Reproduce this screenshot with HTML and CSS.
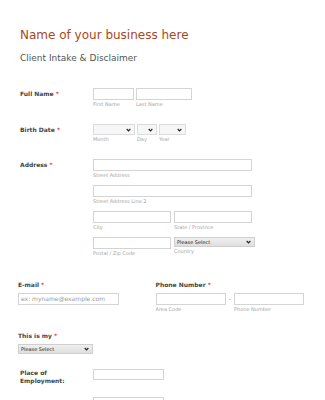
FILE: index.html
```html
<!DOCTYPE html>
<html lang="en">
<head>
    <meta charset="UTF-8">
    <meta name="viewport" content="width=device-width, initial-scale=1.0">
    <title>Client Intake &amp; Disclaimer</title>
    <link rel="stylesheet" href="styles.css">
</head>
<body>
    <div class="form-header">
        <h1 class="titolo">Name of your business here</h1>
        <p class="sottotitolo">Client Intake &amp; Disclaimer</p>
    </div>

    <div class="form-line riga-nome">
        <label class="form-label">Full Name <span class="req">*</span></label>
        <div class="campi">
            <div class="campo">
                <div class="input w-first"></div>
                <span class="sublabel">First Name</span>
            </div>
            <div class="campo">
                <div class="input w-last"></div>
                <span class="sublabel">Last Name</span>
            </div>
        </div>
    </div>

    <div class="form-line riga-data">
        <label class="form-label">Birth Date <span class="req">*</span></label>
        <div class="campi">
            <div class="campo">
                <div class="select chiaro w-month"><span></span><svg class="freccia" viewBox="0 0 6 4"><polyline points="0.8,0.8 3,3 5.2,0.8"/></svg></div>
                <span class="sublabel">Month</span>
            </div>
            <div class="campo">
                <div class="select chiaro w-day"><span></span><svg class="freccia" viewBox="0 0 6 4"><polyline points="0.8,0.8 3,3 5.2,0.8"/></svg></div>
                <span class="sublabel">Day</span>
            </div>
            <div class="campo">
                <div class="select chiaro w-year"><span></span><svg class="freccia" viewBox="0 0 6 4"><polyline points="0.8,0.8 3,3 5.2,0.8"/></svg></div>
                <span class="sublabel">Year</span>
            </div>
        </div>
    </div>

    <div class="form-line riga-indirizzo">
        <label class="form-label">Address <span class="req">*</span></label>
        <div class="indirizzo">
            <div class="campo largo">
                <div class="input"></div>
                <span class="sublabel">Street Address</span>
            </div>
            <div class="campo largo">
                <div class="input"></div>
                <span class="sublabel">Street Address Line 2</span>
            </div>
            <div class="coppia">
                <div class="campo">
                    <div class="input"></div>
                    <span class="sublabel">City</span>
                </div>
                <div class="campo">
                    <div class="input"></div>
                    <span class="sublabel">State / Province</span>
                </div>
            </div>
            <div class="coppia">
                <div class="campo">
                    <div class="input"></div>
                    <span class="sublabel">Postal / Zip Code</span>
                </div>
                <div class="campo">
                    <div class="select scuro w-country"><span>Please Select</span><svg class="freccia" viewBox="0 0 6 4"><polyline points="0.8,0.8 3,3 5.2,0.8"/></svg></div>
                    <span class="sublabel">Country</span>
                </div>
            </div>
        </div>
    </div>

    <div class="riga-contatti">
        <div class="colonna col-email">
            <label class="form-label top">E-mail <span class="req">*</span></label>
            <div class="input w-email"><span class="placeholder">ex: myname@example.com</span></div>
        </div>
        <div class="colonna col-telefono">
            <label class="form-label top">Phone Number <span class="req">*</span></label>
            <div class="telefono">
                <div class="campo">
                    <div class="input w-phone"></div>
                    <span class="sublabel">Area Code</span>
                </div>
                <span class="trattino">-</span>
                <div class="campo">
                    <div class="input w-phone"></div>
                    <span class="sublabel">Phone Number</span>
                </div>
            </div>
        </div>
    </div>

    <div class="riga-tipo">
        <label class="form-label top">This is my <span class="req">*</span></label>
        <div class="select scuro w-tipo"><span>Please Select</span><svg class="freccia" viewBox="0 0 6 4"><polyline points="0.8,0.8 3,3 5.2,0.8"/></svg></div>
    </div>

    <div class="form-line riga-lavoro">
        <label class="form-label senza-spazio">Place of<br>Employment:</label>
        <div class="input w-lavoro"></div>
    </div>

    <div class="form-line">
        <label class="form-label senza-spazio"></label>
        <div class="input w-lavoro"></div>
    </div>
</body>
</html>
```

FILE: styles.css
```css
body {
    margin: 0;
    font-family: "DejaVu Sans", Verdana, sans-serif;
    background-color: #fff;
    color: #333;
}
.form-header {
    padding: 28px 20px 0 20px;
}
.titolo {
    margin: 0;
    font-size: 12px;
    line-height: 14px;
    font-weight: normal;
    color: #a9461d;
}
.sottotitolo {
    margin: 11px 0 0 0;
    font-size: 9px;
    line-height: 11px;
    color: #555;
}
.form-line {
    display: flex;
    padding-left: 20px;
}
.form-label {
    display: block;
    width: 73px;
    flex-shrink: 0;
    padding-top: 2px;
    font-size: 6px;
    line-height: 8px;
    font-weight: bold;
    color: #444;
}
.form-label.top {
    width: auto;
    padding-top: 0;
    margin-bottom: 4px;
}
.form-label.senza-spazio {
    padding-top: 0;
    line-height: 8.5px;
}
.req {
    color: #f23a3c;
}
.riga-nome {
    margin-top: 24px;
    height: 36px;
}
.riga-data {
    height: 35px;
}
.campi {
    display: flex;
    gap: 2px;
}
.campo {
    display: flex;
    flex-direction: column;
}
.input {
    box-sizing: border-box;
    height: 12px;
    border: 1px solid #d4d4d4;
    background-color: #fff;
    display: flex;
    align-items: center;
    padding-left: 2px;
}
.placeholder {
    font-size: 6px;
    color: #999;
    white-space: nowrap;
}
.sublabel {
    margin-top: 1px;
    font-size: 5px;
    line-height: 7px;
    color: #a4a4a4;
    white-space: nowrap;
}
.w-first { width: 41px; }
.w-last { width: 56px; }
.w-month { width: 42px; }
.w-day { width: 20px; }
.w-year { width: 27px; }
.select {
    box-sizing: border-box;
    height: 11px;
    display: flex;
    align-items: center;
    justify-content: space-between;
    padding: 0 3px 0 2px;
    font-size: 5px;
    color: #222;
}
.select.chiaro {
    border: 1px solid #dcdcdc;
    background-color: #f6f6f6;
}
.select.scuro {
    height: 10px;
    border: 1px solid #cfcfcf;
    background: linear-gradient(#f0f0f0, #dedede);
}
.freccia {
    width: 5px;
    height: 4px;
    fill: none;
    stroke: #222;
    stroke-width: 1.4;
}
.indirizzo {
    display: flex;
    flex-direction: column;
    gap: 6px;
    width: 159px;
}
.coppia {
    display: grid;
    grid-template-columns: 78px 81px;
    gap: 3px;
}
.coppia .input {
    width: 78px;
}
.w-country {
    width: 81px;
}
.riga-contatti {
    display: flex;
    margin-top: 24px;
    padding-left: 18px;
}
.col-email {
    width: 137.5px;
}
.w-email {
    width: 101px;
    height: 11.5px;
}
.telefono {
    display: flex;
    align-items: flex-start;
}
.w-phone {
    width: 70px;
    height: 11.5px;
}
.trattino {
    width: 8.5px;
    text-align: center;
    font-size: 6px;
    line-height: 11px;
    color: #888;
}
.riga-tipo {
    margin-top: 19px;
    padding-left: 18px;
}
.w-tipo {
    width: 75px;
}
.riga-lavoro {
    margin-top: 15px;
    height: 28.7px;
}
.w-lavoro {
    width: 71px;
    height: 11.7px;
}
```
